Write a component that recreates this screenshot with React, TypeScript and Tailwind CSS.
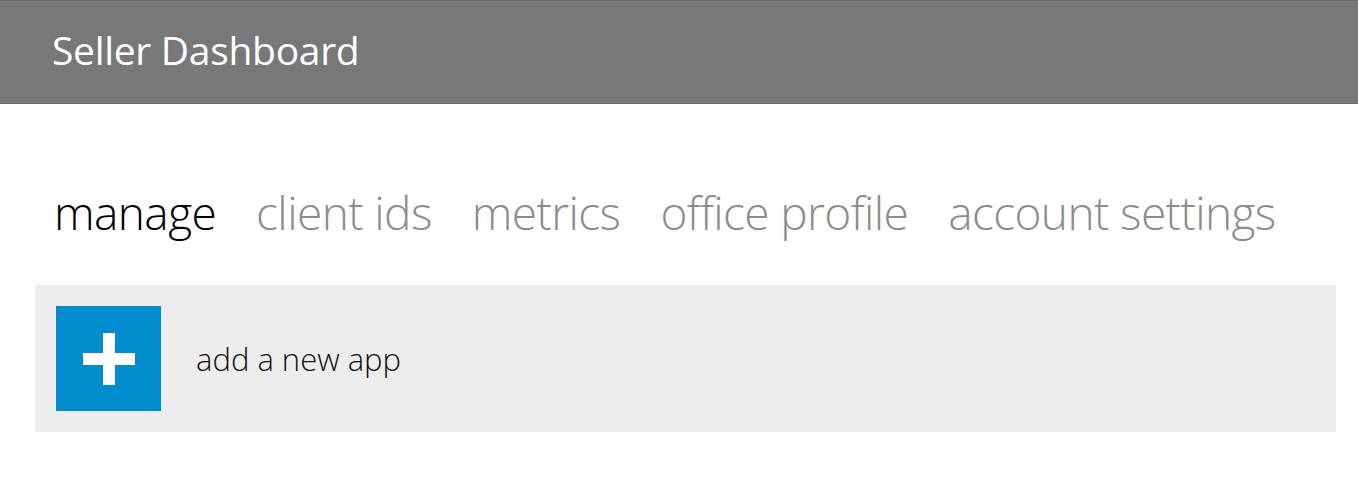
import { useState } from 'react';

const tabs = ['manage', 'client ids', 'metrics', 'office profile', 'account settings'];

export default function App() {
  const [active, setActive] = useState('manage');

  return (
    <div className="min-h-screen bg-white" style={{ fontFamily: '"Open Sans", "Noto Sans", sans-serif' }}>
      {/* top bar */}
      <header className="h-[104px] bg-[#787878] border-y border-[#6e6e6e] flex items-center px-[52px]">
        <h1 className="text-white text-[39px] leading-none tracking-[-0.3px] -mt-[6px]">Seller Dashboard</h1>
      </header>

      {/* tabs */}
      <nav className="flex gap-[40px] px-[54px] pt-[78px]">
        {tabs.map(t => (
          <button
            key={t}
            onClick={() => setActive(t)}
            className={`text-[46px] font-light leading-[60px] tracking-[-0.6px] ${
              active === t ? 'text-black' : 'text-[#8c8c8c]'
            }`}
          >
            {t}
          </button>
        ))}
      </nav>

      {/* apps */}
      <div className="mx-[35px] mt-[43px] w-[1301px] h-[147px] bg-[#ededed] flex items-center px-[21px] gap-[35px]">
        <div className="w-[105px] h-[105px] bg-[#008ccf] flex items-center justify-center">
          <svg width="52" height="52" viewBox="0 0 52 52">
            <rect x="20" y="0" width="12" height="52" fill="white" />
            <rect x="0" y="20" width="52" height="12" fill="white" />
          </svg>
        </div>
        <span className="text-[31px] font-light text-[#111] mt-[1px]">add a new app</span>
      </div>
    </div>
  );
}
